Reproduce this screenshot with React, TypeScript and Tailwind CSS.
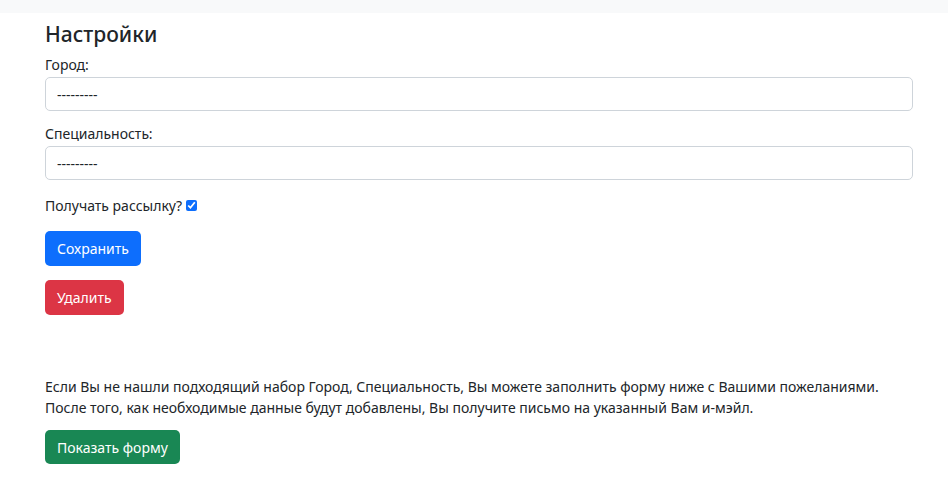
import React from "react";

const font = { fontFamily: '"Noto Sans", "Open Sans", sans-serif' };

function Field({ label }: { label: string }) {
  return (
    <div className="mb-[11px]">
      <label className="block text-[14px] leading-[24px] text-[#212529]">{label}</label>
      <select
        className="block w-full h-[34px] appearance-none rounded-[5px] border border-[#ced4da] bg-white px-[11px] text-[14px] leading-[21px] text-[#212529] outline-none"
        defaultValue=""
      >
        <option value="">---------</option>
      </select>
    </div>
  );
}

export default function App() {
  return (
    <div className="min-h-[495px] bg-white text-[#212529]" style={font}>
      <div className="h-[13px] bg-[#f8f9fa]" />
      <div className="pl-[45px] pr-[35px] pt-[9px]">
        <h4 className="text-[21px] leading-[25px] font-medium mb-[6px]">Настройки</h4>
        <Field label="Город:" />
        <Field label="Специальность:" />
        <div className="flex items-center text-[14px] leading-[24px] mt-[14px]">
          <span>Получать рассылку?</span>
          <input
            type="checkbox"
            defaultChecked
            className="ml-[4px] mt-[-2px] w-[11px] h-[11px] accent-[#0d6efd]"
          />
        </div>
        <div className="mt-[13px] flex flex-col items-start gap-[14px]">
          <button className="h-[35px] rounded-[5px] bg-[#0d6efd] px-[12px] text-[14px] leading-[21px] text-white">
            Сохранить
          </button>
          <button className="h-[35px] rounded-[5px] bg-[#dc3545] px-[12px] text-[14px] leading-[21px] text-white">
            Удалить
          </button>
        </div>
        <p className="mt-[61px] text-[14px] leading-[21px]">
          Если Вы не нашли подходящий набор Город, Специальность, Вы можете заполнить форму ниже с Вашими пожеланиями.
          <br />
          После того, как необходимые данные будут добавлены, Вы получите письмо на указанный Вам и-мэйл.
        </p>
        <button className="mt-[12px] h-[34px] rounded-[5px] bg-[#198754] px-[12px] text-[14px] leading-[21px] text-white">
          Показать форму
        </button>
      </div>
    </div>
  );
}
